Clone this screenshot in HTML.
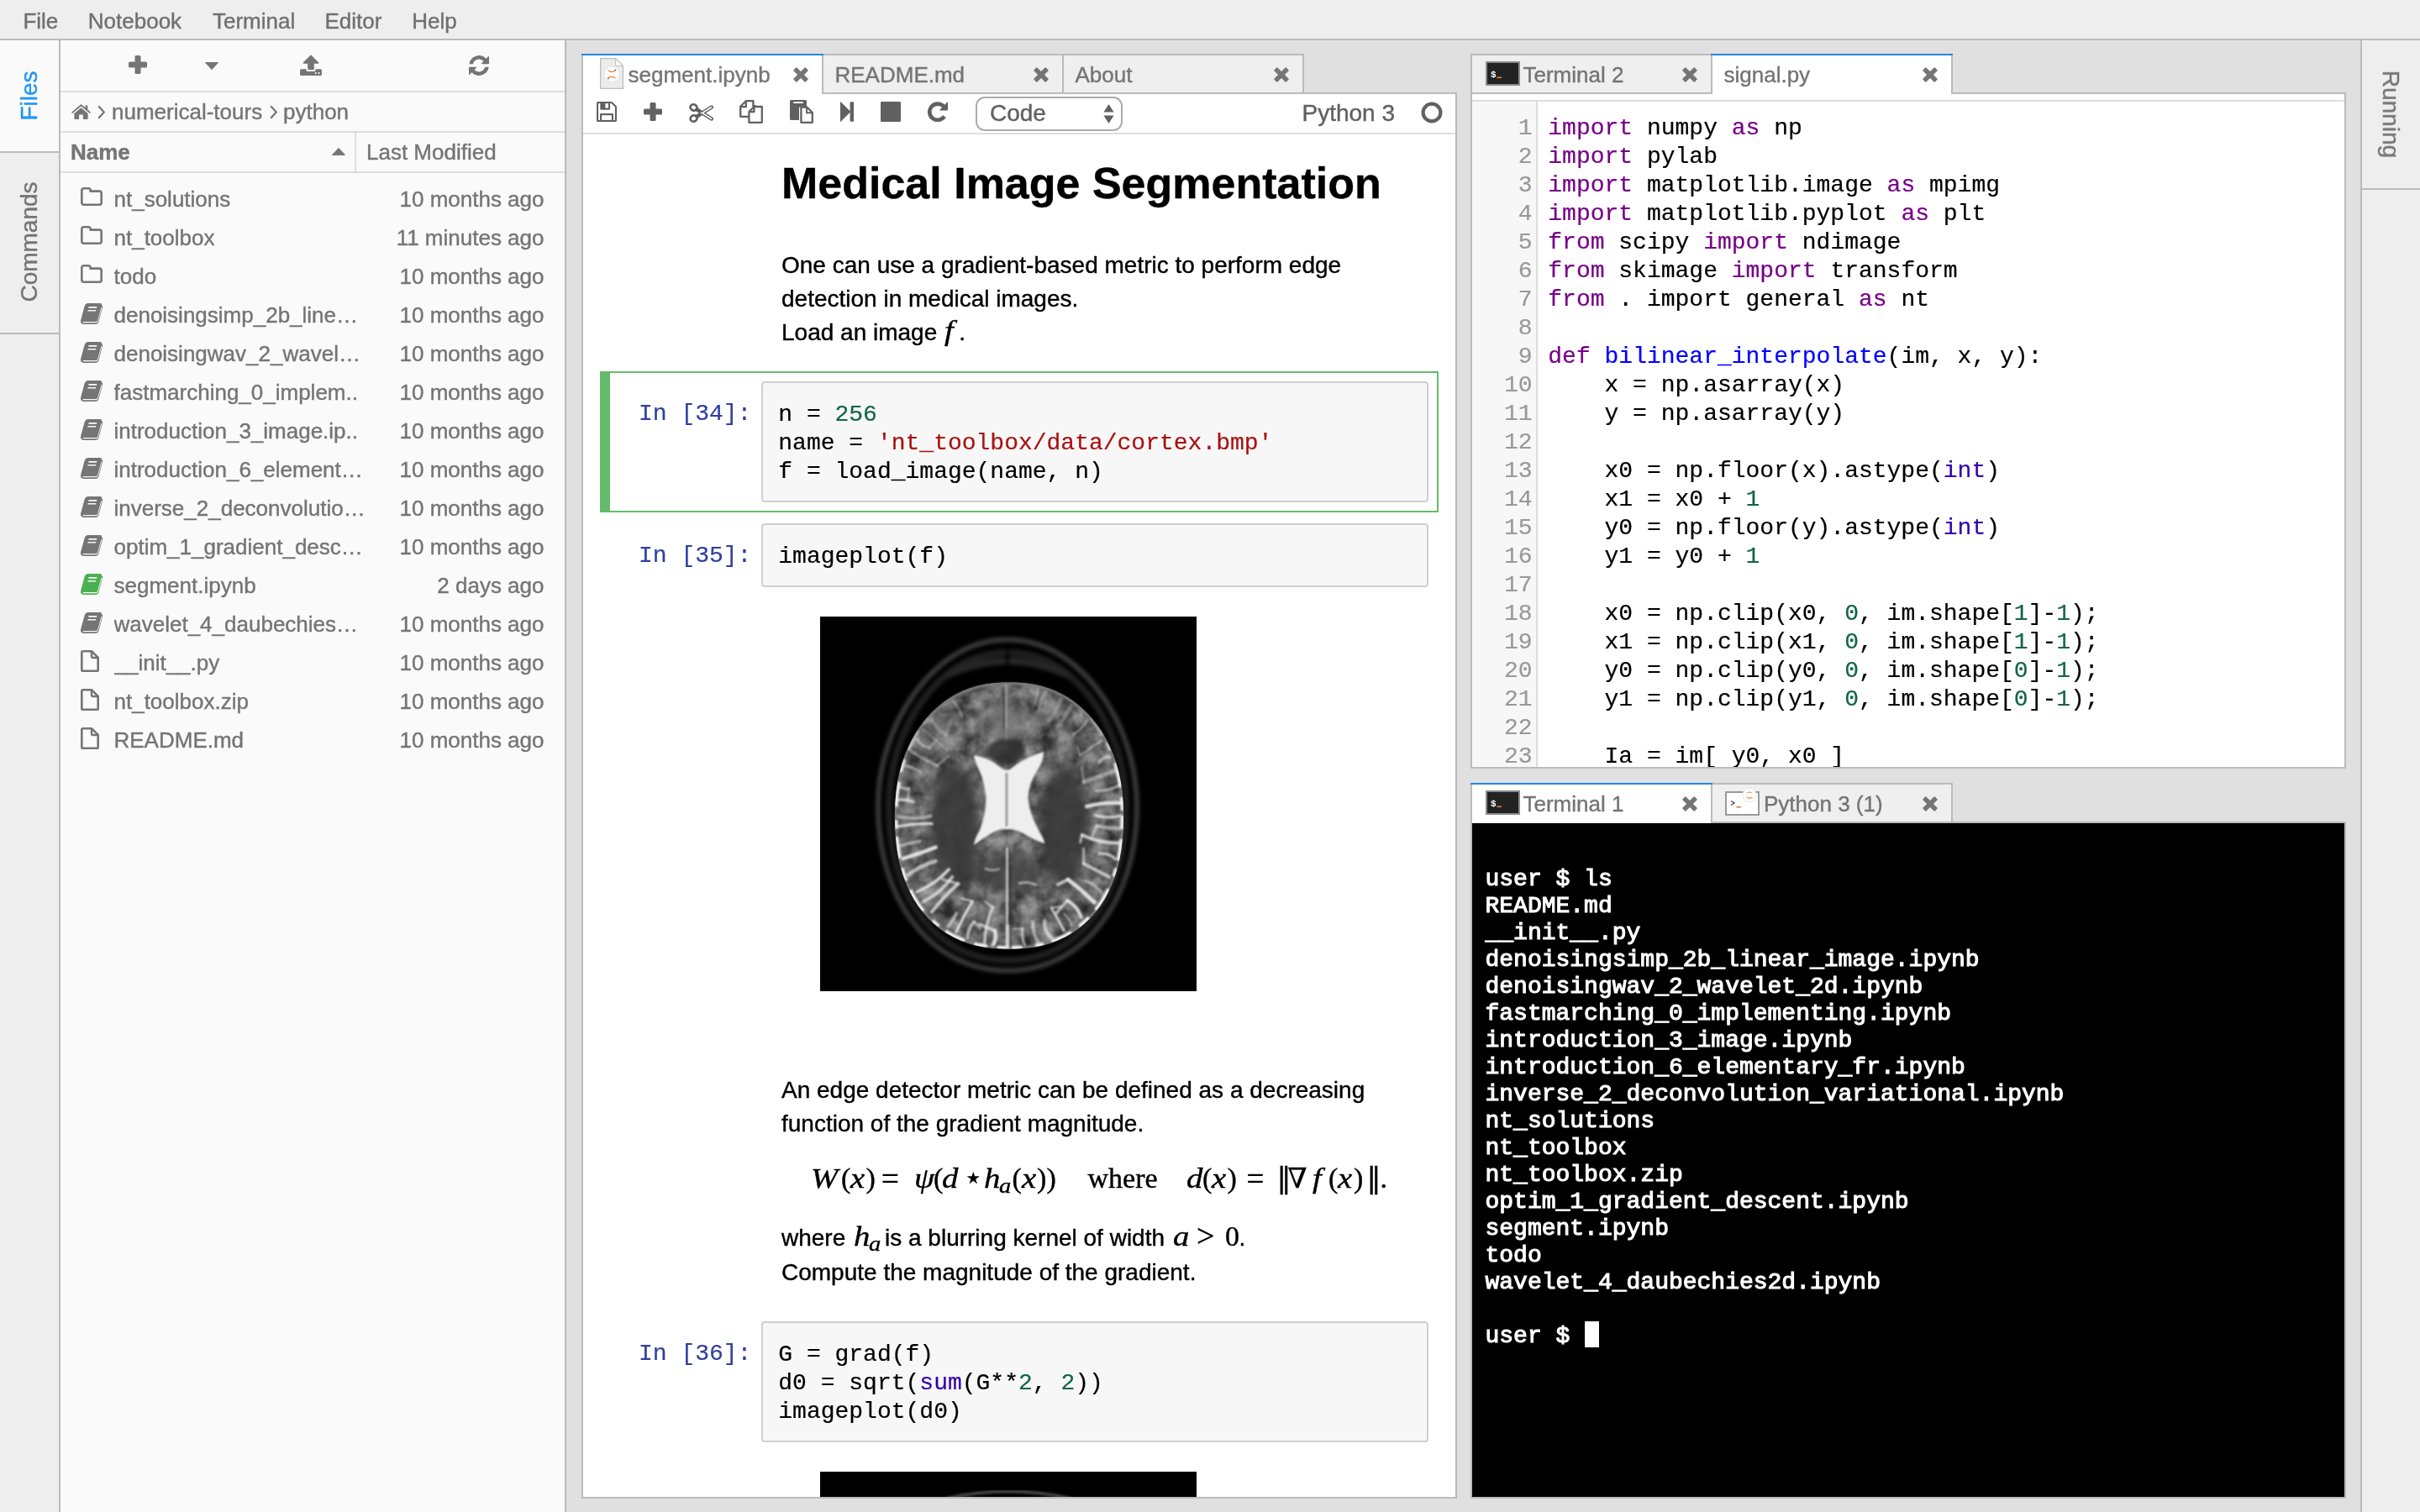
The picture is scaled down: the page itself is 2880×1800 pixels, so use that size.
<!DOCTYPE html>
<html lang="en"><head><meta charset="utf-8"><title>JupyterLab</title>
<style>
html,body{margin:0;padding:0;}
body{width:2880px;height:1800px;overflow:hidden;background:#eeeeee;position:relative;}
#root{position:absolute;left:0;top:0;width:2880px;height:1800px;will-change:transform;}
.b{position:absolute;box-sizing:border-box;display:block;}
.t{position:absolute;white-space:nowrap;margin:0;padding:0;-webkit-text-stroke:0.4px;}
.s{font-family:"Liberation Sans", Helvetica, Arial, sans-serif;}
.m{font-family:"Liberation Mono", "Courier New", Courier, monospace;white-space:pre;-webkit-text-stroke:0.2px;}
.e{font-family:"Liberation Serif", "DejaVu Serif", serif;}
.rot{line-height:1;transform-origin:50% 50%;}
.ck{color:#770088;}
.cn{color:#116644;}
.cs{color:#aa1111;}
.cb{color:#3300aa;}
.cd{color:#0000ff;}
</style></head><body><div id="root">
<div class="b" style="left:0px;top:0px;width:2880px;height:48px;background:#eeeeee;border-bottom:2px solid #bbbbbb;"></div>
<div class="t s" style="left:27.40px;top:9.29px;font-size:26px;line-height:32px;color:#707070;">File</div>
<div class="t s" style="left:104.80px;top:9.29px;font-size:26px;line-height:32px;color:#707070;">Notebook</div>
<div class="t s" style="left:253.00px;top:9.29px;font-size:26px;line-height:32px;color:#707070;">Terminal</div>
<div class="t s" style="left:386.40px;top:9.29px;font-size:26px;line-height:32px;color:#707070;">Editor</div>
<div class="t s" style="left:490.20px;top:9.29px;font-size:26px;line-height:32px;color:#707070;">Help</div>
<div class="b" style="left:0px;top:48px;width:72px;height:1752px;background:#eeeeee;border-right:2px solid #bbbbbb;"></div>
<div class="b" style="left:0px;top:48px;width:70px;height:134px;background:#fafafa;border-bottom:2px solid #bbbbbb;"></div>
<div class="b" style="left:0px;top:182px;width:70px;height:216px;background:#eeeeee;border-bottom:2px solid #bbbbbb;"></div>
<div class="t s rot" style="left:35px;top:113.5px;font-size:28px;color:#2196f3;transform:translate(-50%,-50%) rotate(-90deg);">Files</div>
<div class="t s rot" style="left:35px;top:288px;font-size:28px;color:#757575;transform:translate(-50%,-50%) rotate(-90deg);">Commands</div>
<div class="b" style="left:2809px;top:48px;width:71px;height:1752px;background:#eeeeee;border-left:2px solid #bbbbbb;"></div>
<div class="b" style="left:2811px;top:48px;width:69px;height:178px;background:#eeeeee;border-bottom:2px solid #bbbbbb;"></div>
<div class="t s rot" style="left:2844.5px;top:136px;font-size:28px;color:#757575;transform:translate(-50%,-50%) rotate(90deg);">Running</div>
<div class="b" style="left:674px;top:48px;width:2135px;height:1752px;background:#e0e0e0;"></div>
<div class="b" style="left:72px;top:48px;width:602px;height:1752px;background:#fafafa;border-right:2px solid #bbbbbb;"></div>
<div class="b" style="left:72px;top:108px;width:600px;height:2px;background:#dddddd;"></div>
<svg class="b" style="left:153px;top:66px;" width="22" height="22" viewBox="0 0 22 22"><rect x="7.5" y="0" width="7" height="22" rx="1.6" fill="#757575"/><rect x="0" y="7.5" width="22" height="7" rx="1.6" fill="#757575"/></svg>
<svg class="b" style="left:244px;top:73.5px;" width="16" height="9" viewBox="0 0 16 9"><path d="M0.6 0H15.4Q16.3 0.3 15.6 1L8.6 8.6Q8 9.2 7.4 8.6L0.4 1Q-0.3 0.3 0.6 0Z" fill="#757575"/></svg>
<svg class="b" style="left:357px;top:65px;" width="26" height="25" viewBox="0 0 26 25"><path d="M13 0.3L22.3 9.6Q22.8 10.6 21.6 10.7H16.8V17.2Q16.8 18 16 18H10Q9.2 18 9.2 17.2V10.7H4.4Q3.2 10.6 3.7 9.6Z" fill="#757575"/><path d="M1.6 17.3H7.4V18.2Q7.6 19.8 9.4 19.9H16.6Q18.4 19.8 18.6 18.2V17.3H24.4Q26 17.4 26 19V23.4Q26 25 24.4 25H1.6Q0 25 0 23.4V19Q0 17.4 1.6 17.3Z" fill="#757575"/><circle cx="22.6" cy="22" r="1.1" fill="#fafafa"/><circle cx="18.8" cy="22" r="1.1" fill="#fafafa"/></svg>
<svg class="b" style="left:558px;top:66px;" width="24" height="24" viewBox="0 0 24 24"><path d="M0.3 10.2A11.9 11.9 0 0 1 20.6 3.7L23 1.3Q24 0.6 24 1.8V9.4Q24 10.2 23.2 10.2H15.6Q14.4 10.1 15.2 9.2L17.5 6.9A7.4 7.4 0 0 0 4.9 10.2Z" fill="#757575"/><g transform="rotate(180 12 12)"><path d="M0.3 10.2A11.9 11.9 0 0 1 20.6 3.7L23 1.3Q24 0.6 24 1.8V9.4Q24 10.2 23.2 10.2H15.6Q14.4 10.1 15.2 9.2L17.5 6.9A7.4 7.4 0 0 0 4.9 10.2Z" fill="#757575"/></g></svg>
<div class="b" style="left:72px;top:156px;width:600px;height:2px;background:#dddddd;"></div>
<svg class="b" style="left:84.5px;top:123.5px;" width="23" height="18" viewBox="0 0 23 18"><path d="M11.5 4.2L19.6 10.9V17.2Q19.6 18 18.8 18H13.9V12.6H9.1V18H4.2Q3.4 18 3.4 17.2V10.9Z" fill="#757575"/><path d="M11.5 0L16.5 4.2V1.4H19.3V6.6L23 9.7L21.8 11.1L11.5 2.6L1.2 11.1L0 9.7Z" fill="#757575"/></svg>
<svg class="b" style="left:116px;top:124.5px;" width="9" height="17" viewBox="0 0 9 17"><path d="M1.2 1.2L7.8 8.5L1.2 15.8" fill="none" stroke="#757575" stroke-width="2.2"/></svg>
<div class="t s" style="left:133.00px;top:117.49px;font-size:26px;line-height:32px;color:#757575;">numerical-tours</div>
<svg class="b" style="left:321px;top:124.5px;" width="9" height="17" viewBox="0 0 9 17"><path d="M1.2 1.2L7.8 8.5L1.2 15.8" fill="none" stroke="#757575" stroke-width="2.2"/></svg>
<div class="t s" style="left:337.00px;top:117.49px;font-size:26px;line-height:32px;color:#757575;">python</div>
<div class="b" style="left:72px;top:204px;width:600px;height:2px;background:#dddddd;"></div>
<div class="b" style="left:422px;top:158px;width:2px;height:46px;background:#dddddd;"></div>
<div class="t s" style="left:84.00px;top:165.09px;font-size:26px;line-height:32px;color:#757575;font-weight:bold;">Name</div>
<svg class="b" style="left:394.5px;top:176px;" width="16" height="9" viewBox="0 0 16 9"><path transform="rotate(180 8 4.5)" d="M0.6 0H15.4Q16.3 0.3 15.6 1L8.6 8.6Q8 9.2 7.4 8.6L0.4 1Q-0.3 0.3 0.6 0Z" fill="#757575"/></svg>
<div class="t s" style="left:436.00px;top:165.09px;font-size:26px;line-height:32px;color:#757575;">Last Modified</div>
<svg class="b" style="left:95.5px;top:222.9px;" width="26" height="22" viewBox="0 0 26 22"><path d="M1.3 3.8Q1.3 1.3 3.8 1.3H9.2Q11.7 1.3 11.7 3.8V4.6H22.2Q24.7 4.6 24.7 7.1V18.2Q24.7 20.7 22.2 20.7H3.8Q1.3 20.7 1.3 18.2Z" fill="none" stroke="#757575" stroke-width="2.6"/></svg>
<div class="t s" style="left:135.50px;top:220.69px;font-size:26px;line-height:32px;color:#757575;width:304px;overflow:hidden;">nt_solutions</div>
<div class="t s" style="left:447.50px;top:220.69px;font-size:26px;line-height:32px;color:#757575;width:200px;text-align:right;">10 months ago</div>
<svg class="b" style="left:95.5px;top:268.94px;" width="26" height="22" viewBox="0 0 26 22"><path d="M1.3 3.8Q1.3 1.3 3.8 1.3H9.2Q11.7 1.3 11.7 3.8V4.6H22.2Q24.7 4.6 24.7 7.1V18.2Q24.7 20.7 22.2 20.7H3.8Q1.3 20.7 1.3 18.2Z" fill="none" stroke="#757575" stroke-width="2.6"/></svg>
<div class="t s" style="left:135.50px;top:266.73px;font-size:26px;line-height:32px;color:#757575;width:304px;overflow:hidden;">nt_toolbox</div>
<div class="t s" style="left:447.50px;top:266.73px;font-size:26px;line-height:32px;color:#757575;width:200px;text-align:right;">11 minutes ago</div>
<svg class="b" style="left:95.5px;top:314.98px;" width="26" height="22" viewBox="0 0 26 22"><path d="M1.3 3.8Q1.3 1.3 3.8 1.3H9.2Q11.7 1.3 11.7 3.8V4.6H22.2Q24.7 4.6 24.7 7.1V18.2Q24.7 20.7 22.2 20.7H3.8Q1.3 20.7 1.3 18.2Z" fill="none" stroke="#757575" stroke-width="2.6"/></svg>
<div class="t s" style="left:135.50px;top:312.77px;font-size:26px;line-height:32px;color:#757575;width:304px;overflow:hidden;">todo</div>
<div class="t s" style="left:447.50px;top:312.77px;font-size:26px;line-height:32px;color:#757575;width:200px;text-align:right;">10 months ago</div>
<svg class="b" style="left:95.5px;top:361.12px;" width="27" height="25" viewBox="0 0 27 25"><path d="M8.2 0H23.5Q25.4 0.2 24.9 2.1L26 3.2Q26.4 3.9 26.1 4.8L21.6 21.6Q20.8 24.7 18 25H3.3Q0.2 24.8 0 21.6Q0 20.6 0.3 19.6L4.7 3.3Q5.6 0.3 8.2 0Z" fill="#757575"/><path d="M24.6 4.6L20.2 20.4Q19.7 21.9 18.2 22H3.2Q2.3 22.1 2.6 22.7Q3 23.3 3.8 23.2H18.4Q20.2 23 20.8 21.2L25.4 5Z" fill="#fafafa"/><path d="M9.6 4.1H19.4L19 5.7H9.2ZM8.6 7.9H18.4L18 9.5H8.2Z" fill="#fafafa"/></svg>
<div class="t s" style="left:135.50px;top:358.81px;font-size:26px;line-height:32px;color:#757575;width:304px;overflow:hidden;">denoisingsimp_2b_line…</div>
<div class="t s" style="left:447.50px;top:358.81px;font-size:26px;line-height:32px;color:#757575;width:200px;text-align:right;">10 months ago</div>
<svg class="b" style="left:95.5px;top:407.16px;" width="27" height="25" viewBox="0 0 27 25"><path d="M8.2 0H23.5Q25.4 0.2 24.9 2.1L26 3.2Q26.4 3.9 26.1 4.8L21.6 21.6Q20.8 24.7 18 25H3.3Q0.2 24.8 0 21.6Q0 20.6 0.3 19.6L4.7 3.3Q5.6 0.3 8.2 0Z" fill="#757575"/><path d="M24.6 4.6L20.2 20.4Q19.7 21.9 18.2 22H3.2Q2.3 22.1 2.6 22.7Q3 23.3 3.8 23.2H18.4Q20.2 23 20.8 21.2L25.4 5Z" fill="#fafafa"/><path d="M9.6 4.1H19.4L19 5.7H9.2ZM8.6 7.9H18.4L18 9.5H8.2Z" fill="#fafafa"/></svg>
<div class="t s" style="left:135.50px;top:404.85px;font-size:26px;line-height:32px;color:#757575;width:304px;overflow:hidden;">denoisingwav_2_wavel…</div>
<div class="t s" style="left:447.50px;top:404.85px;font-size:26px;line-height:32px;color:#757575;width:200px;text-align:right;">10 months ago</div>
<svg class="b" style="left:95.5px;top:453.2px;" width="27" height="25" viewBox="0 0 27 25"><path d="M8.2 0H23.5Q25.4 0.2 24.9 2.1L26 3.2Q26.4 3.9 26.1 4.8L21.6 21.6Q20.8 24.7 18 25H3.3Q0.2 24.8 0 21.6Q0 20.6 0.3 19.6L4.7 3.3Q5.6 0.3 8.2 0Z" fill="#757575"/><path d="M24.6 4.6L20.2 20.4Q19.7 21.9 18.2 22H3.2Q2.3 22.1 2.6 22.7Q3 23.3 3.8 23.2H18.4Q20.2 23 20.8 21.2L25.4 5Z" fill="#fafafa"/><path d="M9.6 4.1H19.4L19 5.7H9.2ZM8.6 7.9H18.4L18 9.5H8.2Z" fill="#fafafa"/></svg>
<div class="t s" style="left:135.50px;top:450.89px;font-size:26px;line-height:32px;color:#757575;width:304px;overflow:hidden;">fastmarching_0_implem..</div>
<div class="t s" style="left:447.50px;top:450.89px;font-size:26px;line-height:32px;color:#757575;width:200px;text-align:right;">10 months ago</div>
<svg class="b" style="left:95.5px;top:499.24px;" width="27" height="25" viewBox="0 0 27 25"><path d="M8.2 0H23.5Q25.4 0.2 24.9 2.1L26 3.2Q26.4 3.9 26.1 4.8L21.6 21.6Q20.8 24.7 18 25H3.3Q0.2 24.8 0 21.6Q0 20.6 0.3 19.6L4.7 3.3Q5.6 0.3 8.2 0Z" fill="#757575"/><path d="M24.6 4.6L20.2 20.4Q19.7 21.9 18.2 22H3.2Q2.3 22.1 2.6 22.7Q3 23.3 3.8 23.2H18.4Q20.2 23 20.8 21.2L25.4 5Z" fill="#fafafa"/><path d="M9.6 4.1H19.4L19 5.7H9.2ZM8.6 7.9H18.4L18 9.5H8.2Z" fill="#fafafa"/></svg>
<div class="t s" style="left:135.50px;top:496.93px;font-size:26px;line-height:32px;color:#757575;width:304px;overflow:hidden;">introduction_3_image.ip..</div>
<div class="t s" style="left:447.50px;top:496.93px;font-size:26px;line-height:32px;color:#757575;width:200px;text-align:right;">10 months ago</div>
<svg class="b" style="left:95.5px;top:545.28px;" width="27" height="25" viewBox="0 0 27 25"><path d="M8.2 0H23.5Q25.4 0.2 24.9 2.1L26 3.2Q26.4 3.9 26.1 4.8L21.6 21.6Q20.8 24.7 18 25H3.3Q0.2 24.8 0 21.6Q0 20.6 0.3 19.6L4.7 3.3Q5.6 0.3 8.2 0Z" fill="#757575"/><path d="M24.6 4.6L20.2 20.4Q19.7 21.9 18.2 22H3.2Q2.3 22.1 2.6 22.7Q3 23.3 3.8 23.2H18.4Q20.2 23 20.8 21.2L25.4 5Z" fill="#fafafa"/><path d="M9.6 4.1H19.4L19 5.7H9.2ZM8.6 7.9H18.4L18 9.5H8.2Z" fill="#fafafa"/></svg>
<div class="t s" style="left:135.50px;top:542.97px;font-size:26px;line-height:32px;color:#757575;width:304px;overflow:hidden;">introduction_6_element…</div>
<div class="t s" style="left:447.50px;top:542.97px;font-size:26px;line-height:32px;color:#757575;width:200px;text-align:right;">10 months ago</div>
<svg class="b" style="left:95.5px;top:591.32px;" width="27" height="25" viewBox="0 0 27 25"><path d="M8.2 0H23.5Q25.4 0.2 24.9 2.1L26 3.2Q26.4 3.9 26.1 4.8L21.6 21.6Q20.8 24.7 18 25H3.3Q0.2 24.8 0 21.6Q0 20.6 0.3 19.6L4.7 3.3Q5.6 0.3 8.2 0Z" fill="#757575"/><path d="M24.6 4.6L20.2 20.4Q19.7 21.9 18.2 22H3.2Q2.3 22.1 2.6 22.7Q3 23.3 3.8 23.2H18.4Q20.2 23 20.8 21.2L25.4 5Z" fill="#fafafa"/><path d="M9.6 4.1H19.4L19 5.7H9.2ZM8.6 7.9H18.4L18 9.5H8.2Z" fill="#fafafa"/></svg>
<div class="t s" style="left:135.50px;top:589.01px;font-size:26px;line-height:32px;color:#757575;width:304px;overflow:hidden;">inverse_2_deconvolutio…</div>
<div class="t s" style="left:447.50px;top:589.01px;font-size:26px;line-height:32px;color:#757575;width:200px;text-align:right;">10 months ago</div>
<svg class="b" style="left:95.5px;top:637.36px;" width="27" height="25" viewBox="0 0 27 25"><path d="M8.2 0H23.5Q25.4 0.2 24.9 2.1L26 3.2Q26.4 3.9 26.1 4.8L21.6 21.6Q20.8 24.7 18 25H3.3Q0.2 24.8 0 21.6Q0 20.6 0.3 19.6L4.7 3.3Q5.6 0.3 8.2 0Z" fill="#757575"/><path d="M24.6 4.6L20.2 20.4Q19.7 21.9 18.2 22H3.2Q2.3 22.1 2.6 22.7Q3 23.3 3.8 23.2H18.4Q20.2 23 20.8 21.2L25.4 5Z" fill="#fafafa"/><path d="M9.6 4.1H19.4L19 5.7H9.2ZM8.6 7.9H18.4L18 9.5H8.2Z" fill="#fafafa"/></svg>
<div class="t s" style="left:135.50px;top:635.05px;font-size:26px;line-height:32px;color:#757575;width:304px;overflow:hidden;">optim_1_gradient_desc…</div>
<div class="t s" style="left:447.50px;top:635.05px;font-size:26px;line-height:32px;color:#757575;width:200px;text-align:right;">10 months ago</div>
<svg class="b" style="left:95.5px;top:683.4px;" width="27" height="25" viewBox="0 0 27 25"><path d="M8.2 0H23.5Q25.4 0.2 24.9 2.1L26 3.2Q26.4 3.9 26.1 4.8L21.6 21.6Q20.8 24.7 18 25H3.3Q0.2 24.8 0 21.6Q0 20.6 0.3 19.6L4.7 3.3Q5.6 0.3 8.2 0Z" fill="#4caf50"/><path d="M24.6 4.6L20.2 20.4Q19.7 21.9 18.2 22H3.2Q2.3 22.1 2.6 22.7Q3 23.3 3.8 23.2H18.4Q20.2 23 20.8 21.2L25.4 5Z" fill="#fafafa"/><path d="M9.6 4.1H19.4L19 5.7H9.2ZM8.6 7.9H18.4L18 9.5H8.2Z" fill="#fafafa"/></svg>
<div class="t s" style="left:135.50px;top:681.09px;font-size:26px;line-height:32px;color:#757575;width:304px;overflow:hidden;">segment.ipynb</div>
<div class="t s" style="left:447.50px;top:681.09px;font-size:26px;line-height:32px;color:#757575;width:200px;text-align:right;">2 days ago</div>
<svg class="b" style="left:95.5px;top:729.44px;" width="27" height="25" viewBox="0 0 27 25"><path d="M8.2 0H23.5Q25.4 0.2 24.9 2.1L26 3.2Q26.4 3.9 26.1 4.8L21.6 21.6Q20.8 24.7 18 25H3.3Q0.2 24.8 0 21.6Q0 20.6 0.3 19.6L4.7 3.3Q5.6 0.3 8.2 0Z" fill="#757575"/><path d="M24.6 4.6L20.2 20.4Q19.7 21.9 18.2 22H3.2Q2.3 22.1 2.6 22.7Q3 23.3 3.8 23.2H18.4Q20.2 23 20.8 21.2L25.4 5Z" fill="#fafafa"/><path d="M9.6 4.1H19.4L19 5.7H9.2ZM8.6 7.9H18.4L18 9.5H8.2Z" fill="#fafafa"/></svg>
<div class="t s" style="left:135.50px;top:727.13px;font-size:26px;line-height:32px;color:#757575;width:304px;overflow:hidden;">wavelet_4_daubechies…</div>
<div class="t s" style="left:447.50px;top:727.13px;font-size:26px;line-height:32px;color:#757575;width:200px;text-align:right;">10 months ago</div>
<svg class="b" style="left:95.5px;top:774.28px;" width="22" height="26" viewBox="0 0 22 26"><path d="M2.6 1.3H13.2L20.7 8.8V23.4Q20.7 24.7 19.4 24.7H2.6Q1.3 24.7 1.3 23.4V2.6Q1.3 1.3 2.6 1.3Z" fill="none" stroke="#757575" stroke-width="2.6" stroke-linejoin="round"/><path d="M13 1.5V7.8Q13 9 14.2 9H20.5" fill="none" stroke="#757575" stroke-width="2.4"/></svg>
<div class="t s" style="left:135.50px;top:773.17px;font-size:26px;line-height:32px;color:#757575;width:304px;overflow:hidden;">__init__.py</div>
<div class="t s" style="left:447.50px;top:773.17px;font-size:26px;line-height:32px;color:#757575;width:200px;text-align:right;">10 months ago</div>
<svg class="b" style="left:95.5px;top:820.32px;" width="22" height="26" viewBox="0 0 22 26"><path d="M2.6 1.3H13.2L20.7 8.8V23.4Q20.7 24.7 19.4 24.7H2.6Q1.3 24.7 1.3 23.4V2.6Q1.3 1.3 2.6 1.3Z" fill="none" stroke="#757575" stroke-width="2.6" stroke-linejoin="round"/><path d="M13 1.5V7.8Q13 9 14.2 9H20.5" fill="none" stroke="#757575" stroke-width="2.4"/></svg>
<div class="t s" style="left:135.50px;top:819.21px;font-size:26px;line-height:32px;color:#757575;width:304px;overflow:hidden;">nt_toolbox.zip</div>
<div class="t s" style="left:447.50px;top:819.21px;font-size:26px;line-height:32px;color:#757575;width:200px;text-align:right;">10 months ago</div>
<svg class="b" style="left:95.5px;top:866.36px;" width="22" height="26" viewBox="0 0 22 26"><path d="M2.6 1.3H13.2L20.7 8.8V23.4Q20.7 24.7 19.4 24.7H2.6Q1.3 24.7 1.3 23.4V2.6Q1.3 1.3 2.6 1.3Z" fill="none" stroke="#757575" stroke-width="2.6" stroke-linejoin="round"/><path d="M13 1.5V7.8Q13 9 14.2 9H20.5" fill="none" stroke="#757575" stroke-width="2.4"/></svg>
<div class="t s" style="left:135.50px;top:865.25px;font-size:26px;line-height:32px;color:#757575;width:304px;overflow:hidden;">README.md</div>
<div class="t s" style="left:447.50px;top:865.25px;font-size:26px;line-height:32px;color:#757575;width:200px;text-align:right;">10 months ago</div>
<div class="b nbp" style="left:692px;top:110px;width:1042px;height:1674px;background:#fff;border:2px solid #bbbbbb;overflow:hidden;"></div>
<div class="b" style="left:978px;top:64px;width:288px;height:48px;background:#efefef;border:2px solid #bbbbbb;"></div>
<div class="t s" style="left:993.50px;top:73.09px;font-size:26px;line-height:32px;color:#757575;">README.md</div>
<svg class="b" style="left:1230px;top:80px;" width="18" height="18" viewBox="0 0 18 18"><path d="M3.2 0.5Q3.8 0 4.4 0.5L9 5.1L13.6 0.5Q14.2 0 14.8 0.5L17.5 3.2Q18 3.8 17.5 4.4L12.9 9L17.5 13.6Q18 14.2 17.5 14.8L14.8 17.5Q14.2 18 13.6 17.5L9 12.9L4.4 17.5Q3.8 18 3.2 17.5L0.5 14.8Q0 14.2 0.5 13.6L5.1 9L0.5 4.4Q0 3.8 0.5 3.2Z" fill="#757575"/></svg>
<div class="b" style="left:1264px;top:64px;width:288px;height:48px;background:#efefef;border:2px solid #bbbbbb;"></div>
<div class="t s" style="left:1279.50px;top:73.09px;font-size:26px;line-height:32px;color:#757575;">About</div>
<svg class="b" style="left:1516px;top:80px;" width="18" height="18" viewBox="0 0 18 18"><path d="M3.2 0.5Q3.8 0 4.4 0.5L9 5.1L13.6 0.5Q14.2 0 14.8 0.5L17.5 3.2Q18 3.8 17.5 4.4L12.9 9L17.5 13.6Q18 14.2 17.5 14.8L14.8 17.5Q14.2 18 13.6 17.5L9 12.9L4.4 17.5Q3.8 18 3.2 17.5L0.5 14.8Q0 14.2 0.5 13.6L5.1 9L0.5 4.4Q0 3.8 0.5 3.2Z" fill="#757575"/></svg>
<div class="b" style="left:692px;top:64px;width:288px;height:48px;background:#fff;border-left:2px solid #bbbbbb;border-right:2px solid #bbbbbb;"></div>
<div class="b" style="left:692px;top:64px;width:288px;height:2px;background:#1e88e5;"></div>
<svg class="b" style="left:713.5px;top:68.8px;" width="28" height="37" viewBox="0 0 28 37"><path d="M0.6 0.6H18.6L27.4 9.4V36.4H0.6Z" fill="#ececec" stroke="#bdbdbd" stroke-width="1.3"/><path d="M18.6 0.6V9.4H27.4Z" fill="#fff" stroke="#c4c4c4" stroke-width="1.2"/><circle cx="14" cy="19.4" r="8.4" fill="#fff"/><path d="M9.8 15.4Q14 18.6 18.2 15.4Q14 17.2 9.8 15.4ZM9.8 23.4Q14 20.2 18.2 23.4Q14 21.6 9.8 23.4Z" fill="#e8772a"/><path d="M9.4 14.6Q14 18.4 18.6 14.6M9.4 24.2Q14 20.4 18.6 24.2" fill="none" stroke="#e8772a" stroke-width="1.1"/><circle cx="18.2" cy="14.4" r="0.9" fill="#666"/><circle cx="9.8" cy="24.4" r="0.9" fill="#666"/></svg>
<div class="t s" style="left:747.50px;top:73.09px;font-size:26px;line-height:32px;color:#757575;">segment.ipynb</div>
<svg class="b" style="left:944px;top:80px;" width="18" height="18" viewBox="0 0 18 18"><path d="M3.2 0.5Q3.8 0 4.4 0.5L9 5.1L13.6 0.5Q14.2 0 14.8 0.5L17.5 3.2Q18 3.8 17.5 4.4L12.9 9L17.5 13.6Q18 14.2 17.5 14.8L14.8 17.5Q14.2 18 13.6 17.5L9 12.9L4.4 17.5Q3.8 18 3.2 17.5L0.5 14.8Q0 14.2 0.5 13.6L5.1 9L0.5 4.4Q0 3.8 0.5 3.2Z" fill="#757575"/></svg>
<div class="b" style="left:694px;top:158px;width:1038px;height:2px;background:#dddddd;"></div>
<svg class="b" style="left:710px;top:121px;" width="24" height="24" viewBox="0 0 24 24"><path d="M1.6 0H17.2Q18.4 0 19.4 1L23 4.6Q24 5.6 24 6.8V22.4Q24 24 22.4 24H1.6Q0 24 0 22.4V1.6Q0 0 1.6 0Z" fill="#616161"/><path d="M2.1 2.1H4.3V8.4Q4.3 9.7 5.6 9.7H14.8Q16.1 9.7 16.1 8.4V2.1H17Q17.6 2.1 18.2 2.7L21.3 5.8Q21.9 6.4 21.9 7V21.9H20V15.4Q20 14.1 18.7 14.1H5.3Q4 14.1 4 15.4V21.9H2.1Z" fill="#fff"/><rect x="6.1" y="16.2" width="11.8" height="5.7" fill="#fff"/><rect x="10.4" y="2.1" width="3.6" height="5.5" fill="#fff"/></svg>
<svg class="b" style="left:766px;top:121.5px;" width="22" height="22" viewBox="0 0 22 22"><rect x="7.5" y="0" width="7" height="22" rx="1.6" fill="#616161"/><rect x="0" y="7.5" width="22" height="7" rx="1.6" fill="#616161"/></svg>
<svg class="b" style="left:819.5px;top:122.5px;" width="29" height="23" viewBox="0 0 29 23"><g fill="none" stroke="#616161" stroke-width="2.7"><ellipse cx="5.6" cy="5" rx="4.1" ry="3.5" transform="rotate(25 5.6 5)"/><ellipse cx="5.6" cy="18" rx="4.1" ry="3.5" transform="rotate(-25 5.6 18)"/></g><g stroke="#616161" stroke-width="4.6" stroke-linecap="round"><path d="M9.4 15.6L26.6 4.6"/><path d="M9.4 7.4L26.6 18.4"/></g><g stroke="#fff" stroke-width="1.7" stroke-linecap="round"><path d="M16.4 11.1L26.4 4.7"/><path d="M16.4 11.9L26.4 18.3"/></g><circle cx="14.6" cy="11.5" r="0.9" fill="#fff"/></svg>
<svg class="b" style="left:880px;top:119px;" width="28" height="28" viewBox="0 0 28 28"><g fill="#fff" stroke="#616161" stroke-width="2.3" stroke-linejoin="round"><path d="M7.8 1.2H16.4V7.2H18.6V19.8H1.2V7.8Z"/><path d="M1.4 8.2H7.8V1.6" fill="none"/><path d="M17.4 8H26.8V26.8H11.4V14Z"/><path d="M11.6 14.2H17.4V8.4" fill="none"/></g></svg>
<svg class="b" style="left:940px;top:119px;" width="28" height="28" viewBox="0 0 28 28"><path d="M1.6 0H18.4Q20 0 20 1.6V8H13Q11 8 11 10V24H1.6Q0 24 0 22.4V1.6Q0 0 1.6 0Z" fill="#616161"/><rect x="4.2" y="2.2" width="11.6" height="1.8" fill="#fff"/><path d="M13.4 8.6H20.4L26.8 15V26.8H13.4Z" fill="#fff" stroke="#616161" stroke-width="2.3" stroke-linejoin="round"/><path d="M20 8.8V15.2H26.4" fill="none" stroke="#616161" stroke-width="2"/></svg>
<svg class="b" style="left:1000px;top:121px;" width="16" height="24" viewBox="0 0 16 24"><path d="M0.6 0.2L11.6 11.2V1Q11.6 0.2 12.4 0.2H15.2Q16 0.2 16 1V23Q16 23.8 15.2 23.8H12.4Q11.6 23.8 11.6 23V12.8L0.6 23.8Q0 24.2 0 23.4V0.6Q0 -0.2 0.6 0.2Z" fill="#616161"/></svg>
<svg class="b" style="left:1048px;top:121px;" width="24" height="24" viewBox="0 0 24 24"><rect x="0" y="0" width="24" height="24" rx="1" fill="#616161"/></svg>
<svg class="b" style="left:1104px;top:121px;" width="24" height="24" viewBox="0 0 24 24"><path d="M24 1.6V9.6Q24 10.6 23 10.6H15Q13.8 10.5 14.6 9.6L17.1 7.1A7.3 7.3 0 1 0 17.8 16.6Q18.2 16.2 18.6 16.5L21.4 18.7Q21.8 19.1 21.5 19.5A12 12 0 1 1 20.4 3.8L22.6 1.1Q23.7 0.3 24 1.6Z" fill="#616161"/></svg>
<div class="b" style="left:1160.5px;top:114.5px;width:175px;height:41px;border:2px solid #ababab;border-radius:11px;background:#fff;"></div>
<div class="t s" style="left:1178.00px;top:117.30px;font-size:28px;line-height:35px;color:#616161;">Code</div>
<svg class="b" style="left:1313px;top:124px;" width="13" height="23" viewBox="0 0 13 23"><path d="M6.5 0L12.6 9.4H0.4ZM6.5 23L12.6 13.6H0.4Z" fill="#616161"/></svg>
<div class="t s" style="left:1549.50px;top:116.70px;font-size:28px;line-height:35px;color:#616161;">Python 3</div>
<svg class="b" style="left:1691px;top:120.5px;" width="26" height="26" viewBox="0 0 26 26"><circle cx="13" cy="13" r="10.4" fill="none" stroke="#616161" stroke-width="4.2"/></svg>
<div class="t s" style="left:930.00px;top:187.68px;font-size:52px;line-height:60px;color:#000;font-weight:bold;">Medical Image Segmentation</div>
<div class="t s" style="left:930.00px;top:296.30px;font-size:28px;line-height:40px;color:#000;">One can use a gradient-based metric to perform edge</div>
<div class="t s" style="left:930.00px;top:336.30px;font-size:28px;line-height:40px;color:#000;">detection in medical images.</div>
<div class="t s" style="left:930.00px;top:376.30px;font-size:28px;line-height:40px;color:#000;">Load an image</div>
<div class="t e" style="left:1124.00px;top:372.22px;font-size:34px;line-height:44px;color:#000;font-style:italic;transform:scaleX(1.14);transform-origin:0 50%;">f</div>
<div class="t s" style="left:1141.30px;top:376.30px;font-size:28px;line-height:40px;color:#000;">.</div>
<div class="b" style="left:714px;top:442px;width:998px;height:168px;border:2px solid #66bb6a;border-left:12px solid #66bb6a;background:#fff;"></div>
<div class="b" style="left:906px;top:454px;width:794px;height:144px;border:2px solid #cfcfcf;border-radius:4px;background:#f7f7f7;"></div>
<div class="t m" style="left:760.00px;top:476.14px;font-size:28px;line-height:34px;color:#303f9f;">In [34]:</div>
<div class="t m" style="left:926.30px;top:477.44px;font-size:28px;line-height:34px;color:#000;">n = <span class="cn">256</span></div>
<div class="t m" style="left:926.30px;top:511.44px;font-size:28px;line-height:34px;color:#000;">name = <span class="cs">'nt_toolbox/data/cortex.bmp'</span></div>
<div class="t m" style="left:926.30px;top:545.44px;font-size:28px;line-height:34px;color:#000;">f = load_image(name, n)</div>
<div class="b" style="left:906px;top:623px;width:794px;height:76px;border:2px solid #cfcfcf;border-radius:4px;background:#f7f7f7;"></div>
<div class="t m" style="left:760.00px;top:645.14px;font-size:28px;line-height:34px;color:#303f9f;">In [35]:</div>
<div class="t m" style="left:926.30px;top:646.44px;font-size:28px;line-height:34px;color:#000;">imageplot(f)</div>
<svg class="b" style="left:976px;top:734px;" width="448" height="446" viewBox="0 0 448 446"><defs><filter color-interpolation-filters="sRGB" id="b1" x="-10%" y="-10%" width="120%" height="120%"><feGaussianBlur stdDeviation="1.2"/></filter><filter color-interpolation-filters="sRGB" id="b2" x="-10%" y="-10%" width="120%" height="120%"><feGaussianBlur stdDeviation="2.2"/></filter><filter color-interpolation-filters="sRGB" id="b6" x="-30%" y="-30%" width="160%" height="160%"><feGaussianBlur stdDeviation="7"/></filter><filter color-interpolation-filters="sRGB" id="nz" x="0" y="0" width="100%" height="100%"><feTurbulence type="fractalNoise" baseFrequency="0.05" numOctaves="3" seed="9"/><feColorMatrix type="matrix" values="1.3 0 0 0 -0.2  1.3 0 0 0 -0.2  1.3 0 0 0 -0.2  0 0 0 0 1"/></filter><clipPath id="bc"><path d="M361.0 237.0L360.7 252.6L359.8 265.5L358.4 277.4L356.4 288.7L353.8 299.4L350.7 309.5L347.0 319.1L342.8 328.2L338.1 336.9L332.9 344.9L327.1 352.5L320.9 359.4L314.2 365.8L307.0 371.7L299.4 376.9L291.4 381.5L282.9 385.4L274.0 388.7L264.6 391.4L254.7 393.4L244.1 394.7L232.4 395.4L217.6 395.4L205.9 394.7L195.3 393.4L185.4 391.4L176.0 388.7L167.1 385.4L158.6 381.5L150.6 376.9L143.0 371.7L135.8 365.8L129.1 359.4L122.9 352.5L117.1 344.9L111.9 336.9L107.2 328.2L103.0 319.1L99.3 309.5L96.2 299.4L93.6 288.7L91.6 277.4L90.2 265.5L89.3 252.6L89.0 237.0L89.4 221.4L90.6 208.5L92.3 196.6L94.7 185.3L97.7 174.6L101.2 164.5L105.3 154.9L109.9 145.8L114.9 137.1L120.5 129.1L126.4 121.5L132.8 114.6L139.5 108.2L146.7 102.3L154.2 97.1L162.0 92.5L170.2 88.6L178.7 85.3L187.7 82.6L197.1 80.6L207.1 79.3L218.1 78.6L231.9 78.6L242.9 79.3L252.9 80.6L262.3 82.6L271.3 85.3L279.8 88.6L288.0 92.5L295.8 97.1L303.3 102.3L310.5 108.2L317.2 114.6L323.6 121.5L329.5 129.1L335.1 137.1L340.1 145.8L344.7 154.9L348.8 164.5L352.3 174.6L355.3 185.3L357.7 196.6L359.4 208.5L360.6 221.4Z"/></clipPath><linearGradient id="rg" x1="0" y1="0" x2="0" y2="1" gradientUnits="objectBoundingBox"><stop offset="0.24" stop-color="#fff" stop-opacity="0"/><stop offset="0.42" stop-color="#fff" stop-opacity="1"/></linearGradient><mask id="rm" maskUnits="userSpaceOnUse" x="0" y="0" width="448" height="446"><rect width="448" height="446" fill="url(#rg)"/></mask></defs><rect width="448" height="446" fill="#000"/><g filter="url(#b2)" fill="none"><path d="M377.0 224.5L376.6 240.1L375.6 254.6L373.8 268.6L371.3 282.2L368.1 295.4L364.3 308.1L359.8 320.4L354.6 332.1L348.9 343.3L342.5 353.8L335.5 363.7L328.0 373.0L320.0 381.5L311.5 389.3L302.6 396.3L293.2 402.5L283.5 407.8L273.3 412.3L262.9 415.9L252.1 418.6L240.9 420.5L229.3 421.4L216.7 421.4L205.1 420.5L193.9 418.6L183.1 415.9L172.7 412.3L162.5 407.8L152.8 402.5L143.4 396.3L134.5 389.3L126.0 381.5L118.0 373.0L110.5 363.7L103.5 353.8L97.1 343.3L91.4 332.1L86.2 320.4L81.7 308.1L77.9 295.4L74.7 282.2L72.2 268.6L70.4 254.6L69.4 240.1L69.0 224.5L69.6 208.9L71.2 194.4L73.6 180.4L76.8 166.8L80.8 153.6L85.4 140.9L90.6 128.6L96.4 116.9L102.8 105.7L109.7 95.2L117.0 85.3L124.7 76.0L132.8 67.5L141.2 59.7L149.8 52.7L158.8 46.5L167.9 41.2L177.3 36.7L186.9 33.1L196.8 30.4L206.9 28.5L217.3 27.6L228.7 27.6L239.1 28.5L249.2 30.4L259.1 33.1L268.7 36.7L278.1 41.2L287.2 46.5L296.2 52.7L304.8 59.7L313.2 67.5L321.3 76.0L329.0 85.3L336.3 95.2L343.2 105.7L349.6 116.9L355.4 128.6L360.6 140.9L365.2 153.6L369.2 166.8L372.4 180.4L374.8 194.4L376.4 208.9Z" stroke="#3a3a3a" stroke-width="6"/><path d="M364.0 226.0L363.7 241.4L362.7 255.2L361.1 268.5L358.9 281.2L356.1 293.5L352.6 305.3L348.6 316.6L344.0 327.4L338.8 337.6L333.0 347.3L326.8 356.4L320.0 364.8L312.8 372.6L305.1 379.7L297.0 386.1L288.5 391.7L279.6 396.6L270.3 400.7L260.7 403.9L250.7 406.4L240.3 408.1L229.2 408.9L216.8 408.9L205.7 408.1L195.3 406.4L185.3 403.9L175.7 400.7L166.4 396.6L157.5 391.7L149.0 386.1L140.9 379.7L133.2 372.6L126.0 364.8L119.2 356.4L113.0 347.3L107.2 337.6L102.0 327.4L97.4 316.6L93.4 305.3L89.9 293.5L87.1 281.2L84.9 268.5L83.3 255.2L82.3 241.4L82.0 226.0L82.6 210.6L84.0 196.8L86.2 183.5L89.1 170.8L92.6 158.5L96.7 146.7L101.5 135.4L106.7 124.6L112.4 114.4L118.6 104.7L125.2 95.6L132.2 87.2L139.5 79.4L147.1 72.3L155.0 65.9L163.1 60.3L171.5 55.4L180.1 51.3L188.9 48.1L198.0 45.6L207.5 43.9L217.4 43.1L228.6 43.1L238.5 43.9L248.0 45.6L257.1 48.1L265.9 51.3L274.5 55.4L282.9 60.3L291.0 65.9L298.9 72.3L306.5 79.4L313.8 87.2L320.8 95.6L327.4 104.7L333.6 114.4L339.3 124.6L344.5 135.4L349.3 146.7L353.4 158.5L356.9 170.8L359.8 183.5L362.0 196.8L363.4 210.6Z" stroke="#1f1f1f" stroke-width="8"/><path d="M150 70Q223 36 296 70" stroke="#262626" stroke-width="9"/><path d="M223 34V78" stroke="#000" stroke-width="3"/></g><g filter="url(#b1)"><path d="M361.0 237.0L360.7 252.6L359.8 265.5L358.4 277.4L356.4 288.7L353.8 299.4L350.7 309.5L347.0 319.1L342.8 328.2L338.1 336.9L332.9 344.9L327.1 352.5L320.9 359.4L314.2 365.8L307.0 371.7L299.4 376.9L291.4 381.5L282.9 385.4L274.0 388.7L264.6 391.4L254.7 393.4L244.1 394.7L232.4 395.4L217.6 395.4L205.9 394.7L195.3 393.4L185.4 391.4L176.0 388.7L167.1 385.4L158.6 381.5L150.6 376.9L143.0 371.7L135.8 365.8L129.1 359.4L122.9 352.5L117.1 344.9L111.9 336.9L107.2 328.2L103.0 319.1L99.3 309.5L96.2 299.4L93.6 288.7L91.6 277.4L90.2 265.5L89.3 252.6L89.0 237.0L89.4 221.4L90.6 208.5L92.3 196.6L94.7 185.3L97.7 174.6L101.2 164.5L105.3 154.9L109.9 145.8L114.9 137.1L120.5 129.1L126.4 121.5L132.8 114.6L139.5 108.2L146.7 102.3L154.2 97.1L162.0 92.5L170.2 88.6L178.7 85.3L187.7 82.6L197.1 80.6L207.1 79.3L218.1 78.6L231.9 78.6L242.9 79.3L252.9 80.6L262.3 82.6L271.3 85.3L279.8 88.6L288.0 92.5L295.8 97.1L303.3 102.3L310.5 108.2L317.2 114.6L323.6 121.5L329.5 129.1L335.1 137.1L340.1 145.8L344.7 154.9L348.8 164.5L352.3 174.6L355.3 185.3L357.7 196.6L359.4 208.5L360.6 221.4Z" fill="#565656"/></g><g clip-path="url(#bc)"><rect width="448" height="446" filter="url(#nz)" opacity="0.5"/><g filter="url(#b6)"><ellipse cx="160" cy="250" rx="30" ry="74" fill="#383838" opacity="0.9"/><ellipse cx="290" cy="250" rx="30" ry="74" fill="#383838" opacity="0.9"/><ellipse cx="222" cy="305" rx="44" ry="22" fill="#444" opacity="0.8"/><ellipse cx="222" cy="122" rx="26" ry="20" fill="#808080" opacity="0.65"/><ellipse cx="140" cy="140" rx="18" ry="14" fill="#808080" opacity="0.5"/></g><g filter="url(#b1)" fill="none" stroke="#f0f0f0" stroke-linecap="round"><path d="M359.6 236.5Q343.8 241.6 328.0 236.6" stroke-width="3.4" opacity="0.73"/><path d="M359.0 252.3Q343.9 252.4 329.1 249.4" stroke-width="4.4" opacity="0.54"/><path d="M329.1 249.4L322.6 264.4" stroke-width="3.5" opacity="0.43"/><path d="M356.7 269.5Q333.1 270.2 311.7 260.0" stroke-width="4.0" opacity="0.78"/><path d="M311.7 260.0L309.6 268.5" stroke-width="3.2" opacity="0.62"/><path d="M351.9 289.3Q344.0 280.6 332.3 282.4" stroke-width="3.4" opacity="0.70"/><path d="M344.1 310.1Q328.9 302.1 313.7 294.2" stroke-width="4.0" opacity="0.71"/><path d="M313.7 294.2L313.5 276.1" stroke-width="3.2" opacity="0.56"/><path d="M334.6 328.1Q327.0 318.7 315.6 314.6" stroke-width="2.9" opacity="0.53"/><path d="M326.4 340.2Q311.7 325.6 295.2 313.1" stroke-width="4.9" opacity="0.88"/><path d="M295.2 313.1L282.9 319.0" stroke-width="3.9" opacity="0.71"/><path d="M310.7 358.0Q306.3 344.7 294.1 338.0" stroke-width="3.9" opacity="0.85"/><path d="M294.1 338.0L281.3 352.8" stroke-width="3.1" opacity="0.68"/><path d="M299.4 367.8Q297.3 359.3 290.2 354.1" stroke-width="2.3" opacity="0.53"/><path d="M290.3 374.2Q283.2 360.2 275.0 346.7" stroke-width="2.6" opacity="0.83"/><path d="M275.0 346.7L287.9 345.1" stroke-width="2.1" opacity="0.66"/><path d="M275.4 382.5Q266.0 374.6 267.2 362.5" stroke-width="4.4" opacity="0.64"/><path d="M260.0 388.5Q252.5 377.2 253.2 363.6" stroke-width="3.9" opacity="0.55"/><path d="M244.0 392.3Q239.3 382.3 241.0 371.4" stroke-width="3.0" opacity="0.63"/><path d="M241.0 371.4L230.1 372.0" stroke-width="2.4" opacity="0.51"/><path d="M224.0 393.9Q224.7 381.4 224.2 368.9" stroke-width="4.9" opacity="0.72"/><path d="M205.2 392.2Q210.7 383.6 208.0 373.8" stroke-width="4.7" opacity="0.87"/><path d="M208.0 373.8L190.1 366.5" stroke-width="3.8" opacity="0.69"/><path d="M195.7 390.1Q196.1 367.3 205.5 346.5" stroke-width="3.8" opacity="0.69"/><path d="M205.5 346.5L197.0 339.7" stroke-width="3.0" opacity="0.55"/><path d="M175.4 382.9Q175.7 371.6 183.3 363.2" stroke-width="3.8" opacity="0.63"/><path d="M183.3 363.2L190.7 371.0" stroke-width="3.0" opacity="0.51"/><path d="M161.9 375.6Q170.5 356.7 181.4 339.1" stroke-width="2.8" opacity="0.91"/><path d="M181.4 339.1L168.5 335.7" stroke-width="2.3" opacity="0.73"/><path d="M152.1 368.9Q158.5 362.0 162.2 353.4" stroke-width="3.7" opacity="0.56"/><path d="M132.9 351.5Q147.2 333.5 164.3 318.1" stroke-width="4.1" opacity="0.76"/><path d="M164.3 318.1L146.1 313.0" stroke-width="3.3" opacity="0.61"/><path d="M122.9 339.3Q143.9 329.0 157.3 309.9" stroke-width="3.9" opacity="0.72"/><path d="M115.2 327.8Q137.2 318.6 153.2 301.0" stroke-width="3.6" opacity="0.83"/><path d="M104.7 307.5Q119.5 296.2 137.4 291.2" stroke-width="4.7" opacity="0.66"/><path d="M97.8 288.4Q118.1 282.4 137.7 274.6" stroke-width="4.4" opacity="0.89"/><path d="M94.0 273.2Q106.2 269.3 118.9 267.3" stroke-width="3.8" opacity="0.54"/><path d="M90.8 250.3Q111.8 245.8 133.2 246.7" stroke-width="3.2" opacity="0.83"/><path d="M90.4 237.7Q111.0 242.6 131.5 237.5" stroke-width="4.3" opacity="0.51"/><path d="M91.3 218.3Q101.4 217.1 110.9 220.6" stroke-width="3.5" opacity="0.71"/><path d="M93.7 202.2Q99.1 205.8 105.5 204.8" stroke-width="4.0" opacity="0.49"/><path d="M105.5 204.8L104.6 218.1" stroke-width="3.2" opacity="0.39"/><path d="M100.5 177.2Q110.9 179.3 119.8 185.1" stroke-width="2.6" opacity="0.50"/><path d="M107.7 159.9Q122.8 170.0 139.2 177.6" stroke-width="3.7" opacity="0.41"/><path d="M139.2 177.6L152.8 165.6" stroke-width="3.0" opacity="0.32"/><path d="M115.4 145.9Q120.4 154.3 130.0 156.2" stroke-width="3.4" opacity="0.35"/><path d="M130.0 156.2L139.5 146.0" stroke-width="2.7" opacity="0.28"/><path d="M123.0 134.5Q136.6 146.9 150.9 158.4" stroke-width="2.2" opacity="0.26"/><path d="M132.4 123.1Q139.3 133.6 149.4 140.9" stroke-width="4.4" opacity="0.23"/><path d="M149.4 140.9L155.4 123.9" stroke-width="3.5" opacity="0.19"/><path d="M158.5 100.5Q164.9 108.4 168.5 117.9" stroke-width="4.0" opacity="0.30"/><path d="M259.1 85.2Q259.1 97.2 253.2 107.6" stroke-width="3.2" opacity="0.24"/><path d="M269.0 88.7Q260.5 99.5 260.4 113.3" stroke-width="3.4" opacity="0.23"/><path d="M286.5 97.4Q282.6 112.6 272.4 124.6" stroke-width="4.8" opacity="0.24"/><path d="M299.1 106.0Q292.3 119.3 282.6 130.8" stroke-width="4.2" opacity="0.22"/><path d="M317.7 123.2Q312.0 134.2 301.3 140.4" stroke-width="3.0" opacity="0.41"/><path d="M335.5 147.3Q322.3 156.2 309.3 165.4" stroke-width="2.1" opacity="0.49"/><path d="M309.3 165.4L306.0 153.9" stroke-width="1.7" opacity="0.39"/><path d="M345.5 167.0Q336.9 166.5 332.2 173.5" stroke-width="3.5" opacity="0.55"/><path d="M351.5 183.4Q332.7 190.1 313.9 197.0" stroke-width="4.8" opacity="0.40"/><path d="M313.9 197.0L311.6 180.4" stroke-width="3.9" opacity="0.32"/><path d="M356.0 201.0Q343.3 208.2 328.6 207.4" stroke-width="3.7" opacity="0.53"/><path d="M359.0 222.0Q337.8 220.5 317.2 226.0" stroke-width="4.6" opacity="0.87"/></g><g filter="url(#b1)" fill="none"><path d="M361.0 237.0L360.7 252.6L359.8 265.5L358.4 277.4L356.4 288.7L353.8 299.4L350.7 309.5L347.0 319.1L342.8 328.2L338.1 336.9L332.9 344.9L327.1 352.5L320.9 359.4L314.2 365.8L307.0 371.7L299.4 376.9L291.4 381.5L282.9 385.4L274.0 388.7L264.6 391.4L254.7 393.4L244.1 394.7L232.4 395.4L217.6 395.4L205.9 394.7L195.3 393.4L185.4 391.4L176.0 388.7L167.1 385.4L158.6 381.5L150.6 376.9L143.0 371.7L135.8 365.8L129.1 359.4L122.9 352.5L117.1 344.9L111.9 336.9L107.2 328.2L103.0 319.1L99.3 309.5L96.2 299.4L93.6 288.7L91.6 277.4L90.2 265.5L89.3 252.6L89.0 237.0L89.4 221.4L90.6 208.5L92.3 196.6L94.7 185.3L97.7 174.6L101.2 164.5L105.3 154.9L109.9 145.8L114.9 137.1L120.5 129.1L126.4 121.5L132.8 114.6L139.5 108.2L146.7 102.3L154.2 97.1L162.0 92.5L170.2 88.6L178.7 85.3L187.7 82.6L197.1 80.6L207.1 79.3L218.1 78.6L231.9 78.6L242.9 79.3L252.9 80.6L262.3 82.6L271.3 85.3L279.8 88.6L288.0 92.5L295.8 97.1L303.3 102.3L310.5 108.2L317.2 114.6L323.6 121.5L329.5 129.1L335.1 137.1L340.1 145.8L344.7 154.9L348.8 164.5L352.3 174.6L355.3 185.3L357.7 196.6L359.4 208.5L360.6 221.4Z" stroke="#7c7c7c" stroke-width="5"/><g mask="url(#rm)"><path d="M361.0 237.0L360.7 252.6L359.8 265.5L358.4 277.4L356.4 288.7L353.8 299.4L350.7 309.5L347.0 319.1L342.8 328.2L338.1 336.9L332.9 344.9L327.1 352.5L320.9 359.4L314.2 365.8L307.0 371.7L299.4 376.9L291.4 381.5L282.9 385.4L274.0 388.7L264.6 391.4L254.7 393.4L244.1 394.7L232.4 395.4L217.6 395.4L205.9 394.7L195.3 393.4L185.4 391.4L176.0 388.7L167.1 385.4L158.6 381.5L150.6 376.9L143.0 371.7L135.8 365.8L129.1 359.4L122.9 352.5L117.1 344.9L111.9 336.9L107.2 328.2L103.0 319.1L99.3 309.5L96.2 299.4L93.6 288.7L91.6 277.4L90.2 265.5L89.3 252.6L89.0 237.0L89.4 221.4L90.6 208.5L92.3 196.6L94.7 185.3L97.7 174.6L101.2 164.5L105.3 154.9L109.9 145.8L114.9 137.1L120.5 129.1L126.4 121.5L132.8 114.6L139.5 108.2L146.7 102.3L154.2 97.1L162.0 92.5L170.2 88.6L178.7 85.3L187.7 82.6L197.1 80.6L207.1 79.3L218.1 78.6L231.9 78.6L242.9 79.3L252.9 80.6L262.3 82.6L271.3 85.3L279.8 88.6L288.0 92.5L295.8 97.1L303.3 102.3L310.5 108.2L317.2 114.6L323.6 121.5L329.5 129.1L335.1 137.1L340.1 145.8L344.7 154.9L348.8 164.5L352.3 174.6L355.3 185.3L357.7 196.6L359.4 208.5L360.6 221.4Z" stroke="#eeeeee" stroke-width="7" stroke-dasharray="16 12 26 10 10 16 30 12"/></g></g><g filter="url(#b1)" fill="none"><path d="M221.5 80V150" stroke="#a8a8a8" stroke-width="1.6"/><path d="M218.5 84V150" stroke="#3c3c3c" stroke-width="2.6" opacity="0.6"/><path d="M222.5 275V396" stroke="#dadada" stroke-width="2.2"/><path d="M226.5 296V396" stroke="#2e2e2e" stroke-width="3" opacity="0.7"/><path d="M236 318Q246 314 258 320" stroke="#d0d0d0" stroke-width="3" opacity="0.7"/><path d="M196 300Q206 304 214 300" stroke="#d0d0d0" stroke-width="3" opacity="0.6"/></g><g filter="url(#b2)"><ellipse cx="221.5" cy="160" rx="22" ry="15" fill="#303030" opacity="0.85"/><ellipse cx="221.5" cy="140" rx="14" ry="7" fill="#777" opacity="0.7"/></g><g filter="url(#b1)"><path d="M183 165 Q200 168 213 178 Q219 183 221.7 183 Q225 183 231 178 Q246 167 266 161 Q266 172 258 184 Q248 200 247.5 216 Q249 236 262 258 Q267 266 267 270 Q254 266 240 257 Q230 252 223 253.5 Q214 252 204 258 Q194 264 183 272 Q184 264 190 254 Q197 236 197.5 216 Q196 198 189 182 Q184 172 183 165 Z" fill="#eeeeee"/><path d="M222 186V250" stroke="#909090" stroke-width="2.6"/></g></g></svg>
<div class="t s" style="left:930.00px;top:1277.90px;font-size:28px;line-height:40px;color:#000;">An edge detector metric can be defined as a decreasing</div>
<div class="t s" style="left:930.00px;top:1318.20px;font-size:28px;line-height:40px;color:#000;">function of the gradient magnitude.</div>
<div class="t e" style="left:964.50px;top:1381.12px;font-size:34px;line-height:44px;color:#000;font-style:italic;transform:scaleX(1.14);transform-origin:0 50%;">W</div>
<div class="t e" style="left:1001.00px;top:1381.12px;font-size:34px;line-height:44px;color:#000;">(</div>
<div class="t e" style="left:1011.50px;top:1381.12px;font-size:34px;line-height:44px;color:#000;font-style:italic;transform:scaleX(1.14);transform-origin:0 50%;">x</div>
<div class="t e" style="left:1030.50px;top:1381.12px;font-size:34px;line-height:44px;color:#000;">)</div>
<div class="t e" style="left:1049.00px;top:1381.61px;font-size:37px;line-height:44px;color:#000;">=</div>
<div class="t e" style="left:1088.00px;top:1381.12px;font-size:34px;line-height:44px;color:#000;font-style:italic;transform:scaleX(1.14);transform-origin:0 50%;">ψ</div>
<div class="t e" style="left:1111.00px;top:1381.12px;font-size:34px;line-height:44px;color:#000;">(</div>
<div class="t e" style="left:1121.00px;top:1381.12px;font-size:34px;line-height:44px;color:#000;font-style:italic;transform:scaleX(1.14);transform-origin:0 50%;">d</div>
<div class="t e" style="left:1171.00px;top:1381.12px;font-size:34px;line-height:44px;color:#000;font-style:italic;transform:scaleX(1.14);transform-origin:0 50%;">h</div>
<div class="t e" style="left:1204.50px;top:1381.12px;font-size:34px;line-height:44px;color:#000;">(</div>
<div class="t e" style="left:1215.50px;top:1381.12px;font-size:34px;line-height:44px;color:#000;font-style:italic;transform:scaleX(1.14);transform-origin:0 50%;">x</div>
<div class="t e" style="left:1234.00px;top:1381.12px;font-size:34px;line-height:44px;color:#000;">)</div>
<div class="t e" style="left:1245.50px;top:1381.12px;font-size:34px;line-height:44px;color:#000;">)</div>
<div class="t e" style="left:1294.50px;top:1381.12px;font-size:34px;line-height:44px;color:#000;">where</div>
<div class="t e" style="left:1411.50px;top:1381.12px;font-size:34px;line-height:44px;color:#000;font-style:italic;transform:scaleX(1.14);transform-origin:0 50%;">d</div>
<div class="t e" style="left:1431.00px;top:1381.12px;font-size:34px;line-height:44px;color:#000;">(</div>
<div class="t e" style="left:1441.50px;top:1381.12px;font-size:34px;line-height:44px;color:#000;font-style:italic;transform:scaleX(1.14);transform-origin:0 50%;">x</div>
<div class="t e" style="left:1460.50px;top:1381.12px;font-size:34px;line-height:44px;color:#000;">)</div>
<div class="t e" style="left:1483.50px;top:1381.61px;font-size:37px;line-height:44px;color:#000;">=</div>
<div class="t e" style="left:1562.00px;top:1381.12px;font-size:34px;line-height:44px;color:#000;font-style:italic;transform:scaleX(1.14);transform-origin:0 50%;">f</div>
<div class="t e" style="left:1581.00px;top:1381.12px;font-size:34px;line-height:44px;color:#000;">(</div>
<div class="t e" style="left:1592.00px;top:1381.12px;font-size:34px;line-height:44px;color:#000;font-style:italic;transform:scaleX(1.14);transform-origin:0 50%;">x</div>
<div class="t e" style="left:1611.00px;top:1381.12px;font-size:34px;line-height:44px;color:#000;">)</div>
<div class="t e" style="left:1642.50px;top:1381.12px;font-size:34px;line-height:44px;color:#000;">.</div>
<div class="t e" style="left:1146.50px;top:1379.95px;font-size:36px;line-height:44px;color:#000;font-family:'DejaVu Serif','Liberation Serif',serif;">⋆</div>
<div class="t e" style="left:1189.00px;top:1389.66px;font-size:25px;line-height:44px;color:#000;font-style:italic;transform:scaleX(1.14);transform-origin:0 50%;">a</div>
<div class="t e" style="left:1519.50px;top:1380.12px;font-size:34px;line-height:44px;color:#000;font-family:'DejaVu Serif','Liberation Serif',serif;">‖</div>
<div class="t e" style="left:1626.50px;top:1380.12px;font-size:34px;line-height:44px;color:#000;font-family:'DejaVu Serif','Liberation Serif',serif;">‖</div>
<div class="t e" style="left:1532.50px;top:1381.46px;font-size:33px;line-height:44px;color:#000;font-family:'DejaVu Serif','Liberation Serif',serif;">∇</div>
<div class="t s" style="left:930.00px;top:1454.40px;font-size:28px;line-height:40px;color:#000;">where</div>
<div class="t e" style="left:1015.50px;top:1450.33px;font-size:34px;line-height:44px;color:#000;font-style:italic;transform:scaleX(1.14);transform-origin:0 50%;">h</div>
<div class="t e" style="left:1033.50px;top:1458.86px;font-size:25px;line-height:44px;color:#000;font-style:italic;transform:scaleX(1.14);transform-origin:0 50%;">a</div>
<div class="t s" style="left:1053.00px;top:1454.40px;font-size:28px;line-height:40px;color:#000;">is a blurring kernel of width</div>
<div class="t e" style="left:1395.50px;top:1450.33px;font-size:34px;line-height:44px;color:#000;font-style:italic;transform:scaleX(1.14);transform-origin:0 50%;">a</div>
<div class="t e" style="left:1424.00px;top:1448.97px;font-size:38px;line-height:44px;color:#000;">&gt;</div>
<div class="t e" style="left:1458.00px;top:1450.33px;font-size:34px;line-height:44px;color:#000;">0</div>
<div class="t s" style="left:1474.50px;top:1454.40px;font-size:28px;line-height:40px;color:#000;">.</div>
<div class="t s" style="left:930.00px;top:1494.60px;font-size:28px;line-height:40px;color:#000;">Compute the magnitude of the gradient.</div>
<div class="b" style="left:906px;top:1573px;width:794px;height:144px;border:2px solid #cfcfcf;border-radius:4px;background:#f7f7f7;"></div>
<div class="t m" style="left:760.00px;top:1595.14px;font-size:28px;line-height:34px;color:#303f9f;">In [36]:</div>
<div class="t m" style="left:926.30px;top:1596.44px;font-size:28px;line-height:34px;color:#000;">G = grad(f)</div>
<div class="t m" style="left:926.30px;top:1630.44px;font-size:28px;line-height:34px;color:#000;">d0 = sqrt(<span class="cb">sum</span>(G**<span class="cn">2</span>, <span class="cn">2</span>))</div>
<div class="t m" style="left:926.30px;top:1664.44px;font-size:28px;line-height:34px;color:#000;">imageplot(d0)</div>
<div class="b" style="left:976px;top:1752px;width:448px;height:30px;background:#000;"></div>
<svg class="b" style="left:976px;top:1753px;" width="448" height="29" viewBox="0 0 448 29"><defs><filter color-interpolation-filters="sRGB" id="b9"><feGaussianBlur stdDeviation="1.6"/></filter></defs><path d="M150 31Q224 14 298 31" fill="none" stroke="#5a5a5a" stroke-width="3" filter="url(#b9)"/></svg>
<div class="b" style="left:1750px;top:110px;width:1042px;height:805px;background:#fff;border:2px solid #bbbbbb;"></div>
<div class="b" style="left:1750px;top:64px;width:288px;height:48px;background:#efefef;border:2px solid #bbbbbb;"></div>
<svg class="b" style="left:1767.5px;top:73px;" width="41" height="29" viewBox="0 0 41 29"><rect x="1" y="1" width="39" height="27" fill="#222" stroke="#8a8a8a" stroke-width="2"/><text x="6" y="19" font-family="Liberation Mono, monospace" font-size="11" font-weight="bold" fill="#fff">$</text><rect x="13.5" y="18.5" width="5.5" height="1.6" fill="#ef7b2a"/></svg>
<div class="t s" style="left:1812.50px;top:73.09px;font-size:26px;line-height:32px;color:#757575;">Terminal 2</div>
<svg class="b" style="left:2002px;top:80px;" width="18" height="18" viewBox="0 0 18 18"><path d="M3.2 0.5Q3.8 0 4.4 0.5L9 5.1L13.6 0.5Q14.2 0 14.8 0.5L17.5 3.2Q18 3.8 17.5 4.4L12.9 9L17.5 13.6Q18 14.2 17.5 14.8L14.8 17.5Q14.2 18 13.6 17.5L9 12.9L4.4 17.5Q3.8 18 3.2 17.5L0.5 14.8Q0 14.2 0.5 13.6L5.1 9L0.5 4.4Q0 3.8 0.5 3.2Z" fill="#757575"/></svg>
<div class="b" style="left:2036px;top:64px;width:288px;height:48px;background:#fff;border-left:2px solid #bbbbbb;border-right:2px solid #bbbbbb;"></div>
<div class="b" style="left:2036px;top:64px;width:288px;height:2px;background:#1e88e5;"></div>
<div class="t s" style="left:2051.50px;top:73.09px;font-size:26px;line-height:32px;color:#757575;">signal.py</div>
<svg class="b" style="left:2288px;top:80px;" width="18" height="18" viewBox="0 0 18 18"><path d="M3.2 0.5Q3.8 0 4.4 0.5L9 5.1L13.6 0.5Q14.2 0 14.8 0.5L17.5 3.2Q18 3.8 17.5 4.4L12.9 9L17.5 13.6Q18 14.2 17.5 14.8L14.8 17.5Q14.2 18 13.6 17.5L9 12.9L4.4 17.5Q3.8 18 3.2 17.5L0.5 14.8Q0 14.2 0.5 13.6L5.1 9L0.5 4.4Q0 3.8 0.5 3.2Z" fill="#757575"/></svg>
<div class="b" style="left:1752px;top:119px;width:1038px;height:2px;background:#dddddd;"></div>
<div class="b" style="left:1752px;top:121px;width:78px;height:792px;background:#f7f7f7;border-right:2px solid #dddddd;"></div>
<div class="b" style="left:1752px;top:121px;width:1038px;height:792px;overflow:hidden;"><div class="t m" style="left:0.00px;top:15.34px;font-size:28px;line-height:34px;color:#999;width:71.5px;text-align:right;">1</div>
<div class="t m" style="left:90.30px;top:15.34px;font-size:28px;line-height:34px;color:#000;"><span class="ck">import</span> numpy <span class="ck">as</span> np</div>
<div class="t m" style="left:0.00px;top:49.34px;font-size:28px;line-height:34px;color:#999;width:71.5px;text-align:right;">2</div>
<div class="t m" style="left:90.30px;top:49.34px;font-size:28px;line-height:34px;color:#000;"><span class="ck">import</span> pylab</div>
<div class="t m" style="left:0.00px;top:83.34px;font-size:28px;line-height:34px;color:#999;width:71.5px;text-align:right;">3</div>
<div class="t m" style="left:90.30px;top:83.34px;font-size:28px;line-height:34px;color:#000;"><span class="ck">import</span> matplotlib.image <span class="ck">as</span> mpimg</div>
<div class="t m" style="left:0.00px;top:117.34px;font-size:28px;line-height:34px;color:#999;width:71.5px;text-align:right;">4</div>
<div class="t m" style="left:90.30px;top:117.34px;font-size:28px;line-height:34px;color:#000;"><span class="ck">import</span> matplotlib.pyplot <span class="ck">as</span> plt</div>
<div class="t m" style="left:0.00px;top:151.34px;font-size:28px;line-height:34px;color:#999;width:71.5px;text-align:right;">5</div>
<div class="t m" style="left:90.30px;top:151.34px;font-size:28px;line-height:34px;color:#000;"><span class="ck">from</span> scipy <span class="ck">import</span> ndimage</div>
<div class="t m" style="left:0.00px;top:185.34px;font-size:28px;line-height:34px;color:#999;width:71.5px;text-align:right;">6</div>
<div class="t m" style="left:90.30px;top:185.34px;font-size:28px;line-height:34px;color:#000;"><span class="ck">from</span> skimage <span class="ck">import</span> transform</div>
<div class="t m" style="left:0.00px;top:219.34px;font-size:28px;line-height:34px;color:#999;width:71.5px;text-align:right;">7</div>
<div class="t m" style="left:90.30px;top:219.34px;font-size:28px;line-height:34px;color:#000;"><span class="ck">from</span> . import general <span class="ck">as</span> nt</div>
<div class="t m" style="left:0.00px;top:253.34px;font-size:28px;line-height:34px;color:#999;width:71.5px;text-align:right;">8</div>
<div class="t m" style="left:0.00px;top:287.34px;font-size:28px;line-height:34px;color:#999;width:71.5px;text-align:right;">9</div>
<div class="t m" style="left:90.30px;top:287.34px;font-size:28px;line-height:34px;color:#000;"><span class="ck">def</span> <span class="cd">bilinear_interpolate</span>(im, x, y):</div>
<div class="t m" style="left:0.00px;top:321.34px;font-size:28px;line-height:34px;color:#999;width:71.5px;text-align:right;">10</div>
<div class="t m" style="left:90.30px;top:321.34px;font-size:28px;line-height:34px;color:#000;">    x = np.asarray(x)</div>
<div class="t m" style="left:0.00px;top:355.34px;font-size:28px;line-height:34px;color:#999;width:71.5px;text-align:right;">11</div>
<div class="t m" style="left:90.30px;top:355.34px;font-size:28px;line-height:34px;color:#000;">    y = np.asarray(y)</div>
<div class="t m" style="left:0.00px;top:389.34px;font-size:28px;line-height:34px;color:#999;width:71.5px;text-align:right;">12</div>
<div class="t m" style="left:0.00px;top:423.34px;font-size:28px;line-height:34px;color:#999;width:71.5px;text-align:right;">13</div>
<div class="t m" style="left:90.30px;top:423.34px;font-size:28px;line-height:34px;color:#000;">    x0 = np.floor(x).astype(<span class="cb">int</span>)</div>
<div class="t m" style="left:0.00px;top:457.34px;font-size:28px;line-height:34px;color:#999;width:71.5px;text-align:right;">14</div>
<div class="t m" style="left:90.30px;top:457.34px;font-size:28px;line-height:34px;color:#000;">    x1 = x0 + <span class="cn">1</span></div>
<div class="t m" style="left:0.00px;top:491.34px;font-size:28px;line-height:34px;color:#999;width:71.5px;text-align:right;">15</div>
<div class="t m" style="left:90.30px;top:491.34px;font-size:28px;line-height:34px;color:#000;">    y0 = np.floor(y).astype(<span class="cb">int</span>)</div>
<div class="t m" style="left:0.00px;top:525.34px;font-size:28px;line-height:34px;color:#999;width:71.5px;text-align:right;">16</div>
<div class="t m" style="left:90.30px;top:525.34px;font-size:28px;line-height:34px;color:#000;">    y1 = y0 + <span class="cn">1</span></div>
<div class="t m" style="left:0.00px;top:559.34px;font-size:28px;line-height:34px;color:#999;width:71.5px;text-align:right;">17</div>
<div class="t m" style="left:0.00px;top:593.34px;font-size:28px;line-height:34px;color:#999;width:71.5px;text-align:right;">18</div>
<div class="t m" style="left:90.30px;top:593.34px;font-size:28px;line-height:34px;color:#000;">    x0 = np.clip(x0, <span class="cn">0</span>, im.shape[<span class="cn">1</span>]-<span class="cn">1</span>);</div>
<div class="t m" style="left:0.00px;top:627.34px;font-size:28px;line-height:34px;color:#999;width:71.5px;text-align:right;">19</div>
<div class="t m" style="left:90.30px;top:627.34px;font-size:28px;line-height:34px;color:#000;">    x1 = np.clip(x1, <span class="cn">0</span>, im.shape[<span class="cn">1</span>]-<span class="cn">1</span>);</div>
<div class="t m" style="left:0.00px;top:661.34px;font-size:28px;line-height:34px;color:#999;width:71.5px;text-align:right;">20</div>
<div class="t m" style="left:90.30px;top:661.34px;font-size:28px;line-height:34px;color:#000;">    y0 = np.clip(y0, <span class="cn">0</span>, im.shape[<span class="cn">0</span>]-<span class="cn">1</span>);</div>
<div class="t m" style="left:0.00px;top:695.34px;font-size:28px;line-height:34px;color:#999;width:71.5px;text-align:right;">21</div>
<div class="t m" style="left:90.30px;top:695.34px;font-size:28px;line-height:34px;color:#000;">    y1 = np.clip(y1, <span class="cn">0</span>, im.shape[<span class="cn">0</span>]-<span class="cn">1</span>);</div>
<div class="t m" style="left:0.00px;top:729.34px;font-size:28px;line-height:34px;color:#999;width:71.5px;text-align:right;">22</div>
<div class="t m" style="left:0.00px;top:763.34px;font-size:28px;line-height:34px;color:#999;width:71.5px;text-align:right;">23</div>
<div class="t m" style="left:90.30px;top:763.34px;font-size:28px;line-height:34px;color:#000;">    Ia = im[ y0, x0 ]</div>
<div class="t m" style="left:0.00px;top:797.34px;font-size:28px;line-height:34px;color:#999;width:71.5px;text-align:right;">24</div>
<div class="t m" style="left:90.30px;top:797.34px;font-size:28px;line-height:34px;color:#000;">    Ib = im[ y1, x0 ]</div></div>
<div class="b" style="left:1750px;top:978px;width:1042px;height:806px;background:#000;border:2px solid #bbbbbb;"></div>
<div class="b" style="left:2036px;top:932px;width:288px;height:48px;background:#efefef;border:2px solid #bbbbbb;"></div>
<svg class="b" style="left:2053px;top:937.5px;" width="41" height="33" viewBox="0 0 41 33"><rect x="1" y="5" width="39" height="27" fill="#fff" stroke="#9a9a9a" stroke-width="2"/><path d="M7 15.5L11 18L7 20.5" fill="none" stroke="#444" stroke-width="1.3"/><rect x="13.5" y="22" width="5.5" height="1.6" fill="#ef7b2a"/><circle cx="29" cy="8.6" r="8.2" fill="#fff" stroke="#ddd" stroke-width="0.8"/><path d="M24.4 6.4Q29 2.6 33.6 6.4Q29 4.8 24.4 6.4ZM24.4 10.8Q29 14.6 33.6 10.8Q29 12.4 24.4 10.8Z" fill="#ef7b2a"/></svg>
<div class="t s" style="left:2099.00px;top:941.09px;font-size:26px;line-height:32px;color:#757575;">Python 3 (1)</div>
<svg class="b" style="left:2288px;top:948px;" width="18" height="18" viewBox="0 0 18 18"><path d="M3.2 0.5Q3.8 0 4.4 0.5L9 5.1L13.6 0.5Q14.2 0 14.8 0.5L17.5 3.2Q18 3.8 17.5 4.4L12.9 9L17.5 13.6Q18 14.2 17.5 14.8L14.8 17.5Q14.2 18 13.6 17.5L9 12.9L4.4 17.5Q3.8 18 3.2 17.5L0.5 14.8Q0 14.2 0.5 13.6L5.1 9L0.5 4.4Q0 3.8 0.5 3.2Z" fill="#757575"/></svg>
<div class="b" style="left:1750px;top:932px;width:288px;height:48px;background:#fff;border-left:2px solid #bbbbbb;border-right:2px solid #bbbbbb;"></div>
<div class="b" style="left:1750px;top:932px;width:288px;height:2px;background:#1e88e5;"></div>
<svg class="b" style="left:1767.5px;top:941px;" width="41" height="29" viewBox="0 0 41 29"><rect x="1" y="1" width="39" height="27" fill="#222" stroke="#8a8a8a" stroke-width="2"/><text x="6" y="19" font-family="Liberation Mono, monospace" font-size="11" font-weight="bold" fill="#fff">$</text><rect x="13.5" y="18.5" width="5.5" height="1.6" fill="#ef7b2a"/></svg>
<div class="t s" style="left:1812.50px;top:941.09px;font-size:26px;line-height:32px;color:#757575;">Terminal 1</div>
<svg class="b" style="left:2002px;top:948px;" width="18" height="18" viewBox="0 0 18 18"><path d="M3.2 0.5Q3.8 0 4.4 0.5L9 5.1L13.6 0.5Q14.2 0 14.8 0.5L17.5 3.2Q18 3.8 17.5 4.4L12.9 9L17.5 13.6Q18 14.2 17.5 14.8L14.8 17.5Q14.2 18 13.6 17.5L9 12.9L4.4 17.5Q3.8 18 3.2 17.5L0.5 14.8Q0 14.2 0.5 13.6L5.1 9L0.5 4.4Q0 3.8 0.5 3.2Z" fill="#757575"/></svg>
<div class="t m" style="left:1767.50px;top:1031.24px;font-size:28px;line-height:32px;color:#fff;-webkit-text-stroke:1.1px;">user $ ls</div>
<div class="t m" style="left:1767.50px;top:1063.24px;font-size:28px;line-height:32px;color:#fff;-webkit-text-stroke:1.1px;">README.md</div>
<div class="t m" style="left:1767.50px;top:1095.24px;font-size:28px;line-height:32px;color:#fff;-webkit-text-stroke:1.1px;">__init__.py</div>
<div class="t m" style="left:1767.50px;top:1127.24px;font-size:28px;line-height:32px;color:#fff;-webkit-text-stroke:1.1px;">denoisingsimp_2b_linear_image.ipynb</div>
<div class="t m" style="left:1767.50px;top:1159.24px;font-size:28px;line-height:32px;color:#fff;-webkit-text-stroke:1.1px;">denoisingwav_2_wavelet_2d.ipynb</div>
<div class="t m" style="left:1767.50px;top:1191.24px;font-size:28px;line-height:32px;color:#fff;-webkit-text-stroke:1.1px;">fastmarching_0_implementing.ipynb</div>
<div class="t m" style="left:1767.50px;top:1223.24px;font-size:28px;line-height:32px;color:#fff;-webkit-text-stroke:1.1px;">introduction_3_image.ipynb</div>
<div class="t m" style="left:1767.50px;top:1255.24px;font-size:28px;line-height:32px;color:#fff;-webkit-text-stroke:1.1px;">introduction_6_elementary_fr.ipynb</div>
<div class="t m" style="left:1767.50px;top:1287.24px;font-size:28px;line-height:32px;color:#fff;-webkit-text-stroke:1.1px;">inverse_2_deconvolution_variational.ipynb</div>
<div class="t m" style="left:1767.50px;top:1319.24px;font-size:28px;line-height:32px;color:#fff;-webkit-text-stroke:1.1px;">nt_solutions</div>
<div class="t m" style="left:1767.50px;top:1351.24px;font-size:28px;line-height:32px;color:#fff;-webkit-text-stroke:1.1px;">nt_toolbox</div>
<div class="t m" style="left:1767.50px;top:1383.24px;font-size:28px;line-height:32px;color:#fff;-webkit-text-stroke:1.1px;">nt_toolbox.zip</div>
<div class="t m" style="left:1767.50px;top:1415.24px;font-size:28px;line-height:32px;color:#fff;-webkit-text-stroke:1.1px;">optim_1_gradient_descent.ipynb</div>
<div class="t m" style="left:1767.50px;top:1447.24px;font-size:28px;line-height:32px;color:#fff;-webkit-text-stroke:1.1px;">segment.ipynb</div>
<div class="t m" style="left:1767.50px;top:1479.24px;font-size:28px;line-height:32px;color:#fff;-webkit-text-stroke:1.1px;">todo</div>
<div class="t m" style="left:1767.50px;top:1511.24px;font-size:28px;line-height:32px;color:#fff;-webkit-text-stroke:1.1px;">wavelet_4_daubechies2d.ipynb</div>
<div class="t m" style="left:1767.50px;top:1575.24px;font-size:28px;line-height:32px;color:#fff;-webkit-text-stroke:1.1px;">user $</div>
<div class="b" style="left:1886px;top:1573px;width:16.5px;height:31px;background:#fff;"></div>
</div></body></html>
